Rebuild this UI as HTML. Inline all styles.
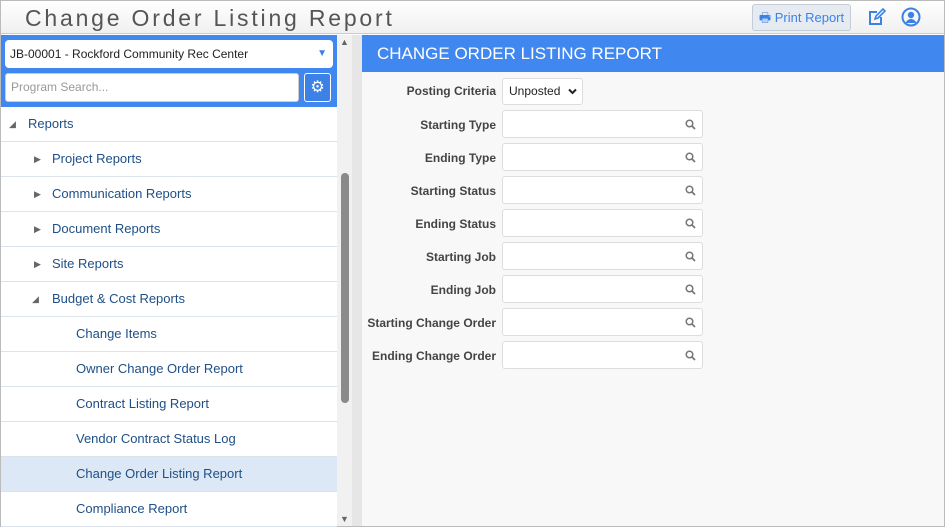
<!DOCTYPE html><html><head><style>
*{box-sizing:border-box}body{margin:0;width:945px;height:527px;overflow:hidden;font-family:"Liberation Sans",sans-serif;background:#fff;position:relative}
.frame{position:absolute;left:0;top:0;width:945px;height:527px;border:1px solid #bbb}
.hdr{position:absolute;left:1px;top:1px;width:943px;height:33px;background:linear-gradient(#fff,#f0f0f0);border-bottom:1px solid #ccc}
.title{position:absolute;left:24px;top:4px;font-size:23px;color:#555;letter-spacing:2.8px;font-weight:300}
.pr{position:absolute;left:751px;top:3px;width:99px;height:27px;border:1px solid #c4ccd6;border-radius:3px;background:#e6ebf1;color:#3c82e6;font-size:13px;line-height:25px;text-align:center}
.left{position:absolute;left:1px;top:35px;width:336px;height:491px;background:#fff}
.blue{position:absolute;left:0;top:0;width:336px;height:72px;background:#4187f0}
.sel{position:absolute;left:4px;top:5px;width:328px;height:28px;background:#fff;border-radius:4px;font-size:12px;line-height:28px;padding-left:5px;color:#222}
.srch{position:absolute;left:4px;top:38px;width:294px;height:29px;background:#fff;border-radius:3px;border:1px solid #ccc;font-size:12px;color:#999;line-height:27px;padding-left:5px}
.gear{position:absolute;left:303px;top:38px;width:27px;height:29px;border:1px solid #fff;border-radius:3px;background:#3c82e6;color:#fff;text-align:center;line-height:27px;font-size:16px}
.row{position:absolute;left:0;width:336px;height:35px;border-bottom:1px solid #dde3ea;font-size:13px;color:#1e4f86;line-height:34px}
.tri{position:absolute;font-size:9px;color:#666}
.sb{position:absolute;left:337px;top:35px;width:15px;height:491px;background:#f1f1f1}
.thumb{position:absolute;left:341px;top:173px;width:8px;height:230px;background:#8a8a8a;border-radius:4px}
.div{position:absolute;left:352px;top:35px;width:10px;height:491px;background:#e6e6e6}
.right{position:absolute;left:362px;top:35px;width:582px;height:491px;background:#f8f8f8}
.rh{position:absolute;left:0;top:0;width:582px;height:37px;background:#4187f0;color:#fff;font-size:17px;line-height:37px;padding-left:15px}
.lab{position:absolute;right:448px;font-size:12px;font-weight:bold;color:#444;text-align:right;white-space:nowrap}
.inp{position:absolute;left:140px;width:201px;height:28px;background:#fff;border:1px solid #ddd;border-radius:3px}
.inp svg{position:absolute;right:6px;top:8px}
</style></head><body>
<div class="frame"></div>
<div class="hdr"><div class="title">Change Order Listing Report</div>
<div class="pr">&#128438; Print Report</div>
<svg style="position:absolute;left:867px;top:7px" width="18" height="18" viewBox="0 0 18 18"><path d="M13 9v7H2V4h7" fill="none" stroke="#3c82e6" stroke-width="2"/><path d="M7 11l1-3 7-7 2 2-7 7z" fill="none" stroke="#3c82e6" stroke-width="1.6"/></svg>
<svg style="position:absolute;left:900px;top:6px" width="20" height="20" viewBox="0 0 20 20"><circle cx="10" cy="10" r="8.5" fill="none" stroke="#3c82e6" stroke-width="2"/><circle cx="10" cy="8" r="3.2" fill="#3c82e6"/><path d="M4.5 16c1.5-3 3.5-4 5.5-4s4 1 5.5 4" fill="#3c82e6"/></svg>
</div>
<div class="left">
<div class="blue"><div class="sel">JB-00001 - Rockford Community Rec Center<span style="position:absolute;right:6px;color:#3c82e6;font-size:10px">▼</span></div>
<div class="srch">Program Search...</div><div class="gear">⚙</div></div>
<div class="row" style="top:72px;padding-left:27px"><span class="tri" style="left:8px">◢</span>Reports</div>
<div class="row" style="top:107px;padding-left:51px"><span class="tri" style="left:33px">▶</span>Project Reports</div>
<div class="row" style="top:142px;padding-left:51px"><span class="tri" style="left:33px">▶</span>Communication Reports</div>
<div class="row" style="top:177px;padding-left:51px"><span class="tri" style="left:33px">▶</span>Document Reports</div>
<div class="row" style="top:212px;padding-left:51px"><span class="tri" style="left:33px">▶</span>Site Reports</div>
<div class="row" style="top:247px;padding-left:51px"><span class="tri" style="left:31px">◢</span>Budget &amp; Cost Reports</div>
<div class="row" style="top:282px;padding-left:75px">Change Items</div>
<div class="row" style="top:317px;padding-left:75px">Owner Change Order Report</div>
<div class="row" style="top:352px;padding-left:75px">Contract Listing Report</div>
<div class="row" style="top:387px;padding-left:75px">Vendor Contract Status Log</div>
<div class="row" style="top:422px;padding-left:75px;background:#dce8f5">Change Order Listing Report</div>
<div class="row" style="top:457px;padding-left:75px">Compliance Report</div>
</div>
<div class="sb"><span style="position:absolute;left:3px;top:2px;font-size:9px;color:#666">▲</span><span style="position:absolute;left:3px;bottom:2px;font-size:9px;color:#666">▼</span></div>
<div class="thumb"></div><div class="div"></div>
<div class="right"><div class="rh">CHANGE ORDER LISTING REPORT</div>
<div class="lab" style="top:49px">Posting Criteria</div>
<div style="position:absolute;left:140px;top:43px;width:81px;height:27px;background:#fff;border:1px solid #ddd;border-radius:3px;font-size:12px;line-height:25px;padding-left:6px;color:#222">Unposted <svg style="position:absolute;right:5px;top:9px" width="9" height="7" viewBox="0 0 9 7"><path d="M1 1.5l3.5 3.5 3.5-3.5" fill="none" stroke="#222" stroke-width="2"/></svg></div>
</div>
<script>
var L=["Starting Type","Ending Type","Starting Status","Ending Status","Starting Job","Ending Job","Starting Change Order","Ending Change Order"],r=document.querySelector('.right'),h='';
L.forEach(function(t,i){var y=75+i*33;h+='<div class="lab" style="top:'+(y+8)+'px">'+t+'</div><div class="inp" style="top:'+y+'px"><svg width="11" height="11" viewBox="0 0 11 11"><circle cx="4.5" cy="4.5" r="3.3" fill="none" stroke="#777" stroke-width="1.5"/><path d="M7 7l3 3" stroke="#777" stroke-width="1.8"/></svg></div>';});
r.insertAdjacentHTML('beforeend',h);
</script>
</body></html>
